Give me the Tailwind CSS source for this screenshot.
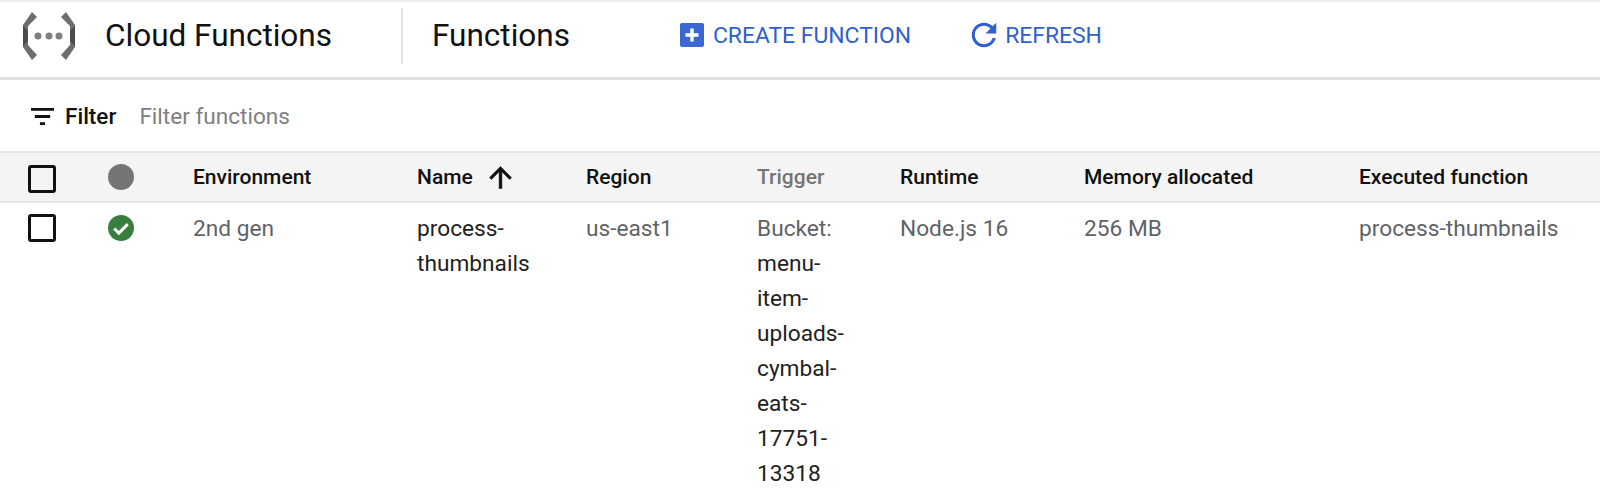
<!DOCTYPE html>
<html lang="en">
<head>
  <meta charset="UTF-8" />
  <title>Cloud Functions</title>
  <script src="https://cdn.jsdelivr.net/npm/@tailwindcss/browser@4"></script>
</head>
<body class="bg-white font-['Roboto',sans-serif] h-[498px] overflow-hidden">

  <!-- top bar -->
  <div class="h-[80px] border-b-[3px] border-[#e0e0e0] flex items-center relative shadow-[inset_0_3px_3px_-2px_rgba(0,0,0,0.12)]">
    <div class="w-[403px] flex items-center h-[56px] border-r-2 border-[#e4e4e4] mt-[-6px]">
      <svg class="ml-[22px] w-[54px] h-[48px]" viewBox="0 0 54 48">
        <path d="M10 0 L15 5 L6 14 V33 L15 43 L10 48 L1 35 V13 Z" fill="#6e6e6e"/>
        <path d="M1 14 L6 19 V29 L1 34 Z" fill="#4a4a4a"/>
        <path d="M44 0 L39 5 L48 14 V33 L39 43 L44 48 L53 35 V13 Z" fill="#6e6e6e"/>
        <path d="M53 14 L48 19 V29 L53 34 Z" fill="#4a4a4a"/>
        <circle cx="16" cy="24" r="3.5" fill="#808080"/>
        <circle cx="27" cy="24" r="3.5" fill="#808080"/>
        <circle cx="37" cy="24" r="3.5" fill="#808080"/>
      </svg>
      <span class="ml-[29px] text-[31.5px] text-[#111]">Cloud Functions</span>
    </div>
    <span class="ml-[29px] text-[31.5px] text-[#111] mt-[-6px]">Functions</span>
    <div class="ml-[109px] flex items-center text-[#2f5fd0] text-[22.9px] mt-[-6px]">
      <svg class="w-[26px] h-[26px] mr-[8px]" viewBox="0 0 26 26">
        <rect x="1" y="1" width="24" height="24" rx="2" fill="#3c66d4"/>
        <path d="M13 6.5v13M6.5 13h13" stroke="#fff" stroke-width="3.4"/>
      </svg>
      <span class="mt-[1px]">CREATE FUNCTION</span>
      <svg class="w-[26px] h-[26px] ml-[60px] mr-[8px]" viewBox="3.5 3.5 17 17">
        <path d="M17.65 6.35A7.958 7.958 0 0 0 12 4c-4.42 0-7.99 3.58-7.99 8s3.57 8 7.99 8c3.73 0 6.84-2.55 7.73-6h-2.08A5.99 5.99 0 0 1 12 18c-3.31 0-6-2.69-6-6s2.69-6 6-6c1.66 0 3.14.69 4.22 1.78L13 11h7V4l-2.35 2.35z" fill="#2f5fd0"/>
      </svg>
      <span class="mt-[1px]">REFRESH</span>
    </div>
  </div>

  <!-- filter row -->
  <div class="h-[71px] flex items-center pl-[31px] pt-[2px]">
    <svg class="w-[23px] h-[17px]" viewBox="3 6 18 12" preserveAspectRatio="none">
      <path d="M10 18h4v-2h-4v2zM3 6v2h18V6H3zm3 7h12v-2H6v2z" fill="#111"/>
    </svg>
    <span class="ml-[11px] text-[22.5px] font-medium text-[#111]">Filter</span>
    <span class="ml-[23px] text-[22.6px] text-[#808080]">Filter functions</span>
  </div>

  <!-- table -->
  <div class="grid grid-cols-[108px_85px_224px_169px_171px_143px_184px_275px_1fr] text-[22.7px]">
    <div class="h-[52px] col-span-9 grid grid-cols-subgrid items-center bg-[#f4f4f4] border-y-2 border-[#e4e4e4] font-medium text-[21px] text-[#111]">
      <div class="pl-[28px]"><div class="w-[28px] h-[28px] border-[3px] border-[#111] rounded-[3px] mt-[3px]"></div></div>
      <div><div class="w-[26px] h-[26px] rounded-full bg-[#757575]"></div></div>
      <div class="pt-[1px]">Environment</div>
      <div class="flex items-center pt-[1px]">Name
        <svg class="w-[33px] h-[33px] ml-[11px]" viewBox="0 0 24 24"><path d="M4 12l1.41 1.41L11 7.83V20h2V7.83l5.58 5.59L20 12l-8-8-8 8z" fill="#111" stroke="#111" stroke-width="0.4"/></svg>
      </div>
      <div class="pt-[1px]">Region</div>
      <div class="pt-[1px] text-[#757575]">Trigger</div>
      <div class="pt-[1px]">Runtime</div>
      <div class="pt-[1px]">Memory allocated</div>
      <div class="pt-[1px]">Executed function</div>
    </div>
    <div class="col-span-9 grid grid-cols-subgrid leading-[35px] pt-[8px] text-[#5f6368]">
      <div class="pl-[28px] pt-[3px]"><div class="w-[28px] h-[28px] border-[3px] border-[#111] rounded-[3px]"></div></div>
      <div class="pt-[4px]">
        <svg class="w-[26px] h-[26px]" viewBox="0 0 25 25">
          <circle cx="12.5" cy="12.5" r="12.5" fill="#377e3f"/>
          <path d="M6 13l4.4 4.4 8.6-8.6" fill="none" stroke="#fff" stroke-width="2.8"/>
        </svg>
      </div>
      <div>2nd gen</div>
      <div class="text-[#222]">process-<br>thumbnails</div>
      <div>us-east1</div>
      <div class="text-[#222]"><span class="text-[#5f6368]">Bucket:</span><br>menu-<br>item-<br>uploads-<br>cymbal-<br>eats-<br>17751-<br>13318</div>
      <div>Node.js 16</div>
      <div>256 MB</div>
      <div>process-thumbnails</div>
    </div>
  </div>

</body>
</html>
